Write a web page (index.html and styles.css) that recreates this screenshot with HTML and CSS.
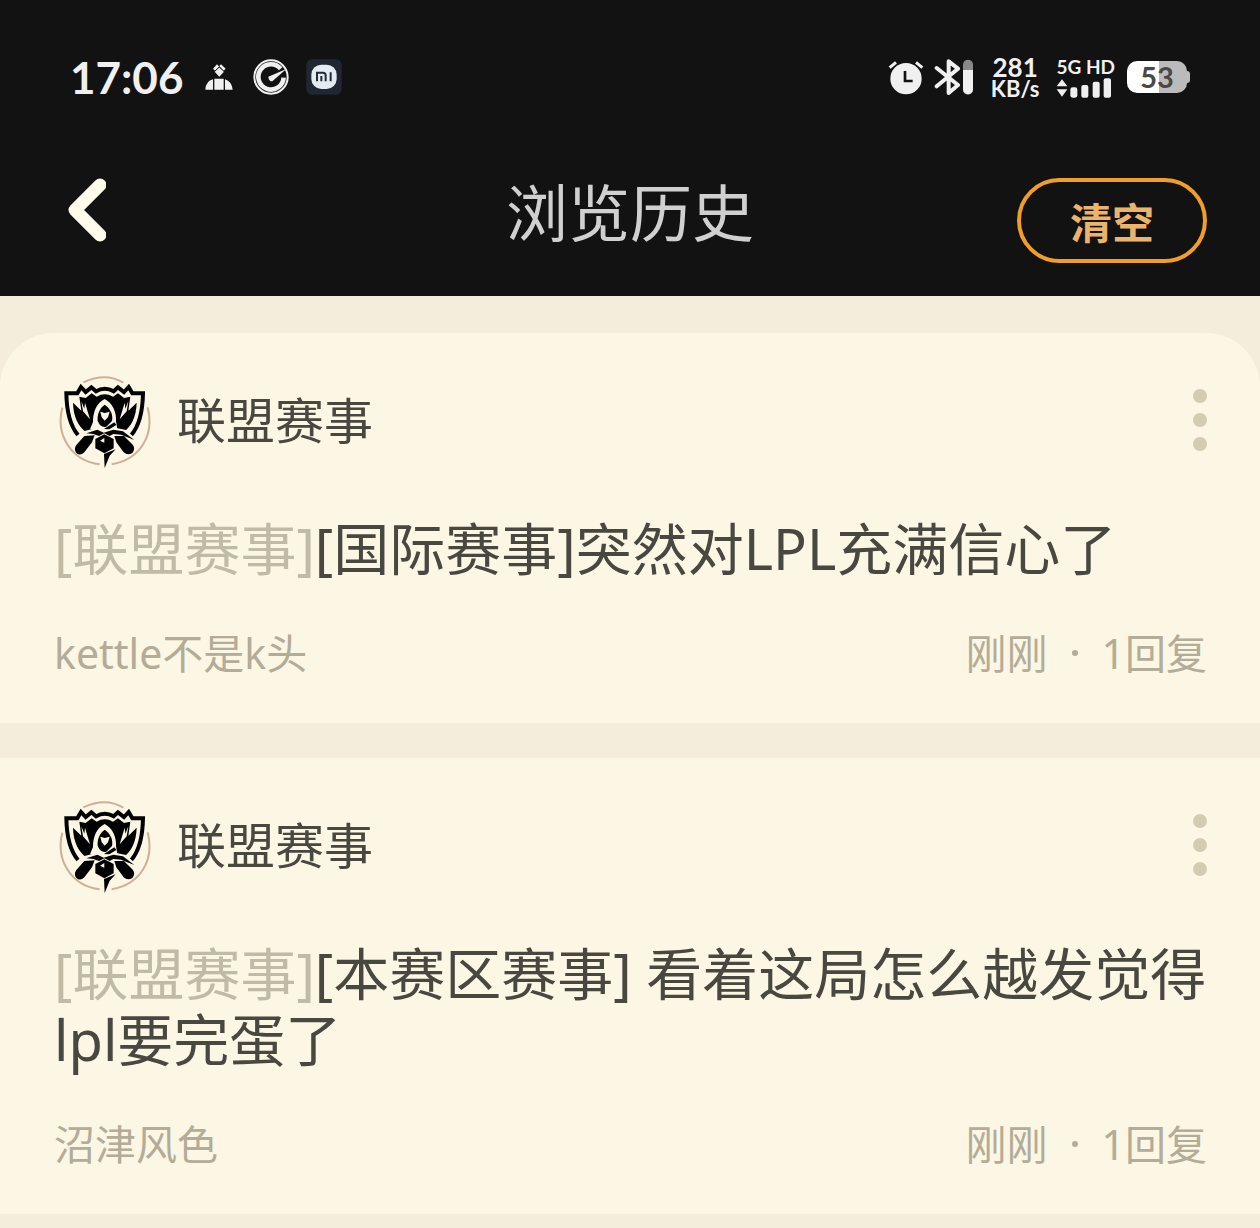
FILE: index.html
```html
<!DOCTYPE html>
<html lang="zh-CN">
<head>
    <meta charset="UTF-8">
    <meta name="viewport" content="width=device-width, initial-scale=1.0">
    <title>浏览历史</title>
    <link rel="stylesheet" href="styles.css">
</head>
<body>
    <!-- shared drawings -->
    <svg class="sprite" aria-hidden="true">
        <symbol id="trophy" viewBox="0 0 300 300">
            <g fill="none" stroke="#cdb096" stroke-width="6">
                <path d="M88 37Q155 6 208 38"/>
                <path d="M25 113C4 195 52 273 137 283"/>
                <path d="M281 112C302 195 260 268 173 283"/>
            </g>
            <!-- shield -->
            <path fill="none" stroke="#000" stroke-width="12" d="M72 195C46 165 38 125 37 70H70L81 51L95 66L112 52L126 64Q152 48 179 64L192 52L210 66L224 51L235 70H267C266 125 258 165 232 195"/>
            <path d="M76 80L95 84L113 70L128 80Q152 66 177 80L192 70L210 84L229 80L223 122L248 98C247 140 232 170 208 187H97C73 170 58 140 57 98L82 122Z"/>
            <path fill="#fcf6e4" d="M82 94L91 116L93 98L108 148L87 124ZM223 94L214 116L212 98L197 148L218 124Z"/>
            <!-- hood -->
            <path fill="#fcf6e4" d="M152 87C128 98 117 126 117 156L108 178L138 180L151 186L190 176L186 154C188 126 175 98 152 87Z"/>
            <path d="M152 104C137 114 129 133 131 153Q140 174 157 170L174 153C178 132 168 115 152 104Z"/>
            <path fill="#fcf6e4" d="M139 125L152 129L167 125L162 142L152 152L143 142Z"/>
            <path d="M150 177L181 157L187 165L166 178Z"/>
            <!-- arms and cube -->
            <path fill="#fcf6e4" d="M60 212L92 183L128 173L151 184L184 173L216 180L248 210L235 218L185 210L151 190L118 210Z"/>
            <path d="M97 190L130 179L149 188L178 179L207 184L241 210L201 194L178 192L167 198L151 190L135 198L118 192Z"/>
            <path d="M124 207L151 193L179 207L179 235L151 250L124 235Z"/>
            <path fill="#fcf6e4" d="M138 212L151 204V218Z"/>
            <path d="M91 198L122 196L114 217L91 247Q79 259 67 249Q58 238 67 225ZM181 198L210 198L237 225Q245 238 235 249Q221 258 209 247L187 217Z"/>
            <path d="M150 252L185 238L167 257L152 294Z"/>
        </symbol>
    </svg>

    <header class="top">
        <div class="status">
            <div class="status-side">
                <span class="time">17:06</span>
                <svg class="icon-person" viewBox="0 0 84 84" aria-hidden="true" fill="#f0f0f0">
                    <path d="M24 17L36 4L43 11L31 24ZM43 9L48 4L62 17L55 24ZM29 26L43 13L57 26L43 41ZM1 80Q3 53 24 49V80ZM28 47H56V80H28ZM60 49Q80 55 83 80H60Z"/>
                    <path d="M29 25L43 12L57 25" fill="none" stroke="#121212" stroke-width="3"/>
                </svg>
                <svg class="icon-gauge" viewBox="0 0 108 108" aria-hidden="true" fill="none" stroke="#f0f0f0">
                    <circle cx="54" cy="54" r="50" stroke-width="6"/>
                    <path d="M83 29A38 38 0 1 0 92 56" stroke-width="14"/>
                    <path d="M46 53L100 30L58 67Q47 67 46 53Z" fill="#f0f0f0" stroke="none"/>
                </svg>
                <svg class="icon-mi" viewBox="0 0 108 108" aria-hidden="true">
                    <rect x="1" y="1" width="106" height="106" rx="16" fill="#202733"/>
                    <rect x="16" y="17" width="76" height="73" rx="30" fill="#e5ebf3"/>
                    <path d="M33 67V41H51Q59 41 59 49V67M46 51V67M74 40V67" fill="none" stroke="#252b35" stroke-width="6"/>
                </svg>
            </div>
            <div class="status-side">
                <svg class="icon-alarm" viewBox="0 0 108 108" aria-hidden="true">
                    <circle cx="54" cy="59" r="47" fill="#f0f0f0"/>
                    <path d="M5 26L24 10M84 10L103 26" stroke="#f0f0f0" stroke-width="9"/>
                    <path d="M51 36V66H74" fill="none" stroke="#121212" stroke-width="8"/>
                </svg>
                <svg class="icon-bluetooth" viewBox="0 0 120 108" aria-hidden="true">
                    <path d="M8 27L72 78L44 102V7L72 29L8 82" fill="none" stroke="#f0f0f0" stroke-width="12" stroke-linejoin="round" stroke-linecap="round"/>
                    <rect x="87" y="2" width="30" height="105" rx="15" fill="#888"/>
                    <path d="M87 33H117V91A15 15 0 0 1 87 91Z" fill="#f0f0f0"/>
                </svg>
                <div class="speed"><span class="speed-value">281</span><span>KB/s</span></div>
                <div class="network">
                    <span>5G HD</span>
                    <svg class="icon-signal" viewBox="0 0 168 60" aria-hidden="true" fill="#f0f0f0">
                        <path d="M2 25L18 4L34 25ZM2 34H34L18 56Z"/>
                        <rect x="43" y="28" width="21" height="31" rx="7"/>
                        <rect x="76" y="21" width="21" height="38" rx="6"/>
                        <rect x="110" y="11" width="21" height="48" rx="6"/>
                        <rect x="143" y="1" width="22" height="58" rx="6"/>
                    </svg>
                </div>
                <div class="battery"><span class="battery-level">53</span></div>
            </div>
        </div>
        <nav class="nav">
            <button class="back" type="button" aria-label="返回">
                <svg viewBox="0 0 38 64" aria-hidden="true"><path d="M32 7L7 32L32 57" fill="none" stroke="#fdfbea" stroke-width="13" stroke-linecap="round" stroke-linejoin="round"/></svg>
            </button>
            <h1>浏览历史</h1>
            <button class="clear" type="button">清空</button>
        </nav>
    </header>

    <main class="history">
        <article class="card">
            <div class="card-head">
                <svg class="avatar" aria-hidden="true"><use href="#trophy"/></svg>
                <span class="board">联盟赛事</span>
                <button class="more" type="button" aria-label="更多"><i></i><i></i><i></i></button>
            </div>
            <h2><span class="tag">[联盟赛事]</span>[国际赛事]突然对LPL充满信心了</h2>
            <div class="meta">
                <span>kettle不是k头</span>
                <span class="info"><span>刚刚</span><i class="dot"></i><span>1回复</span></span>
            </div>
        </article>
        <article class="card">
            <div class="card-head">
                <svg class="avatar" aria-hidden="true"><use href="#trophy"/></svg>
                <span class="board">联盟赛事</span>
                <button class="more" type="button" aria-label="更多"><i></i><i></i><i></i></button>
            </div>
            <h2><span class="tag">[联盟赛事]</span>[本赛区赛事] 看着这局怎么越发觉得lpl要完蛋了</h2>
            <div class="meta">
                <span>沼津风色</span>
                <span class="info"><span>刚刚</span><i class="dot"></i><span>1回复</span></span>
            </div>
        </article>
    </main>
</body>
</html>
```
FILE: styles.css
```css
* {
    box-sizing: border-box;
}
body {
    margin: 0;
    font-family: "Noto Sans", "Noto Sans CJK SC", sans-serif;
    background-color: #f4eddb;
    color: #484740;
}
button {
    margin: 0;
    padding: 0;
    border: none;
    background: none;
    font-family: inherit;
    cursor: pointer;
}
svg {
    display: block;
    flex: none;
}
h1, h2 {
    margin: 0;
    font-weight: normal;
}
.sprite {
    position: absolute;
    width: 0;
    height: 0;
}

/* header */
.top {
    background-color: #121212;
    padding-bottom: 33px;
}
.status {
    display: flex;
    justify-content: space-between;
    align-items: center;
    height: 154px;
    padding: 0 70px;
    color: #f0f0f0;
    font-family: Lato, sans-serif;
    font-weight: bold;
}
.status-side {
    display: flex;
    align-items: center;
}
.time {
    font-size: 44px;
    line-height: 48px;
}
.icon-person {
    width: 28px;
    height: 28px;
    margin-left: 22px;
}
.icon-gauge {
    width: 36px;
    height: 36px;
    margin-left: 20px;
}
.icon-mi {
    width: 36px;
    height: 36px;
    margin-left: 17px;
}
.icon-alarm {
    width: 36px;
    height: 36px;
}
.icon-bluetooth {
    width: 40px;
    height: 36px;
    margin-left: 10px;
}
.speed {
    display: flex;
    flex-direction: column;
    align-items: center;
    margin-left: 17px;
    font-size: 22px;
    line-height: 20px;
}
.speed-value {
    font-size: 26px;
    line-height: 24px;
}
.network {
    margin-left: 17px;
    font-size: 19px;
    line-height: 22px;
}
.icon-signal {
    width: 56px;
    height: 20px;
}
.battery {
    display: flex;
    align-items: center;
    margin-left: 12px;
}
.battery-level {
    width: 60px;
    border-radius: 10px;
    background: linear-gradient(to right, #fff 53%, #bbb 53%);
    color: #484848;
    font-size: 29px;
    line-height: 32px;
    text-align: center;
}
.battery::after {
    content: "";
    width: 3px;
    height: 12px;
    border-radius: 0 4px 4px 0;
    background-color: #bbb;
}
.nav {
    display: grid;
    grid-template-columns: 1fr auto 1fr;
    align-items: start;
    padding: 24px 53px 0;
}
.back {
    width: 38px;
    height: 64px;
    margin-left: 15px;
}
.back svg {
    width: 38px;
    height: 64px;
}
h1 {
    color: #d0d0d0;
    font-size: 62px;
    line-height: 70px;
}
.clear {
    justify-self: end;
    width: 190px;
    height: 85px;
    border: 4px solid #f09e2b;
    border-radius: 43px;
    color: #ecb36a;
    font-size: 42px;
    font-weight: bold;
}

/* list */
.history {
    display: flex;
    flex-direction: column;
    gap: 35px;
    padding: 37px 0 14px;
}
.card {
    padding: 37px 53px 46px 54px;
    background-color: #fcf6e4;
}
.card:first-child {
    border-radius: 54px 54px 0 0;
}
.card-head {
    display: flex;
    align-items: center;
}
.avatar {
    width: 100px;
    height: 100px;
}
.board {
    margin-left: 23px;
    font-size: 49px;
    line-height: 60px;
}
.more {
    display: flex;
    flex-direction: column;
    gap: 10px;
    margin-left: auto;
}
.more i {
    width: 14px;
    height: 14px;
    border-radius: 50%;
    background-color: #d4ccb2;
}
h2 {
    margin: 45px 0 48px;
    font-size: 56px;
    line-height: 66px;
}
.tag {
    color: #c1baa6;
}
.meta {
    display: flex;
    justify-content: space-between;
    color: #b3ac98;
    font-size: 41px;
    line-height: 48px;
}
.info {
    display: flex;
    align-items: center;
}
.dot {
    width: 6px;
    height: 6px;
    margin: 0 24px;
    border-radius: 50%;
    background-color: #b3ac98;
}
```
